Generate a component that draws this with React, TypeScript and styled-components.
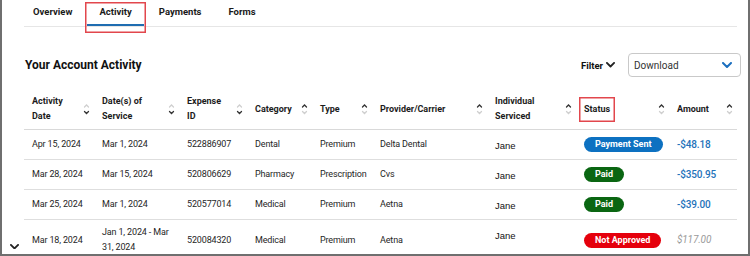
import React from 'react'
import styled, { createGlobalStyle } from 'styled-components'

type SortDir = 'asc' | 'desc'

interface IColumn {
  label: React.ReactNode
  width: number
  sort: SortDir
  highlight?: boolean
}

interface IRow {
  activity: string
  service: React.ReactNode
  expenseId: string
  category: string
  type: string
  provider: string
  person: string
  status: 'sent' | 'paid' | 'denied'
  amount: string
}

const columns: IColumn[] = [
  { label: <>Activity<br />Date</>, width: 70, sort: 'desc' },
  { label: <>Date(s) of<br />Service</>, width: 85, sort: 'desc' },
  { label: <>Expense<br />ID</>, width: 68, sort: 'desc' },
  { label: 'Category', width: 65, sort: 'asc' },
  { label: 'Type', width: 60, sort: 'asc' },
  { label: 'Provider/Carrier', width: 115, sort: 'asc' },
  { label: <>Individual<br />Serviced</>, width: 89, sort: 'asc' },
  { label: 'Status', width: 93, sort: 'asc', highlight: true },
  { label: 'Amount', width: 68, sort: 'asc' },
]

const rows: IRow[] = [
  { activity: 'Apr 15, 2024', service: 'Mar 1, 2024', expenseId: '522886907', category: 'Dental', type: 'Premium', provider: 'Delta Dental', person: 'Jane', status: 'sent', amount: '-$48.18' },
  { activity: 'Mar 28, 2024', service: 'Mar 15, 2024', expenseId: '520806629', category: 'Pharmacy', type: 'Prescription', provider: 'Cvs', person: 'Jane', status: 'paid', amount: '-$350.95' },
  { activity: 'Mar 25, 2024', service: 'Mar 1, 2024', expenseId: '520577014', category: 'Medical', type: 'Premium', provider: 'Aetna', person: 'Jane', status: 'paid', amount: '-$39.00' },
  { activity: 'Mar 18, 2024', service: <>Jan 1, 2024 - Mar<br />31, 2024</>, expenseId: '520084320', category: 'Medical', type: 'Premium', provider: 'Aetna', person: 'Jane', status: 'denied', amount: '$117.00' },
]

const statusLabel = {
  sent: 'Payment Sent',
  paid: 'Paid',
  denied: 'Not Approved',
}

const tabs = ['Overview', 'Activity', 'Payments', 'Forms']

const SortIcon: React.FC<{ dir: SortDir }> = ({ dir }) => (
  <svg width="7" height="14" viewBox="0 0 7 14" fill="none" strokeWidth="1.3" strokeLinecap="round">
    <path d="M1.5 5 L3.5 3 L5.5 5" stroke={dir === 'asc' ? '#333' : '#cfcfcf'} />
    <path d="M1.5 9.5 L3.5 11.5 L5.5 9.5" stroke={dir === 'desc' ? '#333' : '#cfcfcf'} />
  </svg>
)

const Chevron: React.FC<{ color?: string; size?: number }> = ({ color = '#222', size = 9 }) => (
  <svg width={size} height={size * 0.6} viewBox="0 0 10 6" fill="none">
    <path d="M1 1 L5 5 L9 1" stroke={color} strokeWidth="2" strokeLinecap="round" strokeLinejoin="round" />
  </svg>
)

const App: React.FC = () => {
  return (
    <>
      <GlobalStyle />
      <Frame>
        <TabBar>
          {tabs.map((t) => (
            <Tab key={t} $active={t === 'Activity'}>
              {t}
              {t === 'Activity' && <TabMarker />}
            </Tab>
          ))}
        </TabBar>

        <Toolbar>
          <Heading>Your Account Activity</Heading>
          <FilterButton>
            Filter <Chevron />
          </FilterButton>
          <Select>
            Download
            <Chevron color="#1b6fbf" size={10} />
          </Select>
        </Toolbar>

        <Table>
          <colgroup>
            {columns.map((c, i) => (
              <col key={i} style={{ width: c.width }} />
            ))}
          </colgroup>
          <thead>
            <tr>
              {columns.map((c, i) => (
                <Th key={i}>
                  <HeadInner>
                    <HeadLabel>
                      {c.label}
                      {c.highlight && <LabelMarker />}
                    </HeadLabel>
                    <SortIcon dir={c.sort} />
                  </HeadInner>
                </Th>
              ))}
            </tr>
          </thead>
          <tbody>
            {rows.map((r) => (
              <tr key={r.expenseId}>
                <Td>{r.activity}</Td>
                <Td>{r.service}</Td>
                <Td>{r.expenseId}</Td>
                <Td>{r.category}</Td>
                <Td>{r.type}</Td>
                <Td>{r.provider}</Td>
                <PersonCell>{r.person}</PersonCell>
                <Td>
                  <Badge $status={r.status}>{statusLabel[r.status]}</Badge>
                </Td>
                <Td>
                  <Amount $muted={r.status === 'denied'}>{r.amount}</Amount>
                </Td>
              </tr>
            ))}
          </tbody>
        </Table>

        <ScrollToggle>
          <Chevron size={9} />
        </ScrollToggle>
      </Frame>
    </>
  )
}

const GlobalStyle = createGlobalStyle`
  body {
    margin: 0;
    background: #fff;
    font-family: Roboto, "Liberation Sans", sans-serif;
    color: #222;
  }
`

const Frame = styled.div`
  position: relative;
  box-sizing: border-box;
  width: 750px;
  height: 256px;
  overflow: hidden;
  border: 2px solid #6f6f6f;
  border-top: none;
  padding: 0 11px 0 22px;
`

const TabBar = styled.div`
  display: flex;
  height: 26px;
  border-bottom: 1px solid #e6e6e6;
`

const Tab = styled.div<{ $active?: boolean }>`
  position: relative;
  display: flex;
  align-items: center;
  justify-content: center;
  box-sizing: border-box;
  height: 26px;
  padding: 0 12px 1px;
  margin-right: 3px;
  font-size: 9.5px;
  font-weight: 700;
  color: #1a1a1a;
  border-bottom: 2px solid ${(p) => (p.$active ? '#1f6db1' : 'transparent')};
  &:first-child {
    padding-left: 9px;
  }
`

const TabMarker = styled.span`
  position: absolute;
  left: -2px;
  right: -2px;
  top: 2px;
  bottom: -9px;
  box-shadow: inset 0 0 0 1.5px #e2474d;
`

const Toolbar = styled.div`
  display: flex;
  align-items: center;
  height: 24px;
  margin: 26px -4px 0 1px;
`

const Heading = styled.h2`
  flex: 1;
  margin: 0;
  font-size: 12px;
  font-weight: 700;
  color: #111;
`

const FilterButton = styled.div`
  display: flex;
  align-items: center;
  gap: 3px;
  margin-right: 13px;
  font-size: 9.5px;
  font-weight: 700;
  color: #111;
`

const Select = styled.div`
  display: flex;
  align-items: center;
  justify-content: space-between;
  box-sizing: border-box;
  width: 113px;
  height: 24px;
  padding: 0 8px 0 5px;
  border: 1px solid #c9c9c9;
  border-radius: 4px;
  font-size: 10px;
  color: #333;
`

const Table = styled.table`
  width: 713px;
  margin-top: 12px;
  border-collapse: collapse;
  table-layout: fixed;
  font-size: 9px;
  line-height: 15px;
`

const Th = styled.th`
  height: 40px;
  padding: 0 4px 0 8px;
  border-bottom: 1.5px solid #d9d9d9;
  text-align: left;
  vertical-align: middle;
  font-weight: 700;
  color: #1c1c1c;
`

const HeadInner = styled.div`
  display: flex;
  align-items: center;
  justify-content: space-between;
`

const HeadLabel = styled.span`
  position: relative;
  white-space: nowrap;
`

const LabelMarker = styled.span`
  position: absolute;
  left: -5px;
  right: -5px;
  top: -5px;
  bottom: -5px;
  box-shadow: inset 0 0 0 1.5px #e2474d;
`

const Td = styled.td`
  height: 30px;
  box-sizing: border-box;
  padding: 5px 8px;
  border-bottom: 1px solid #dedede;
  vertical-align: middle;
  white-space: nowrap;
  letter-spacing: -0.15px;
  color: #262626;
`

const PersonCell = styled(Td)`
  vertical-align: top;
  padding-top: 8px;
  font-family: "Liberation Sans", Arial, sans-serif;
  font-size: 9.5px;
  letter-spacing: 0;
  color: #111;
`

const badgeColors = {
  sent: '#0d71c1',
  paid: '#0a6612',
  denied: '#e5000c',
}

const Badge = styled.span<{ $status: 'sent' | 'paid' | 'denied' }>`
  display: inline-block;
  padding: 0 11px;
  height: 15px;
  line-height: 15px;
  border-radius: 8px;
  background: ${(p) => badgeColors[p.$status]};
  color: #fff;
  font-size: 9px;
  font-weight: 700;
  letter-spacing: 0;
  text-align: center;
`

const Amount = styled.span<{ $muted?: boolean }>`
  font-size: 10px;
  font-weight: ${(p) => (p.$muted ? 400 : 500)};
  font-style: ${(p) => (p.$muted ? 'italic' : 'normal')};
  color: ${(p) => (p.$muted ? '#9a9a9a' : '#1f73ba')};
`

const ScrollToggle = styled.div`
  position: absolute;
  left: 8px;
  bottom: 5px;
  display: flex;
`

export default App
